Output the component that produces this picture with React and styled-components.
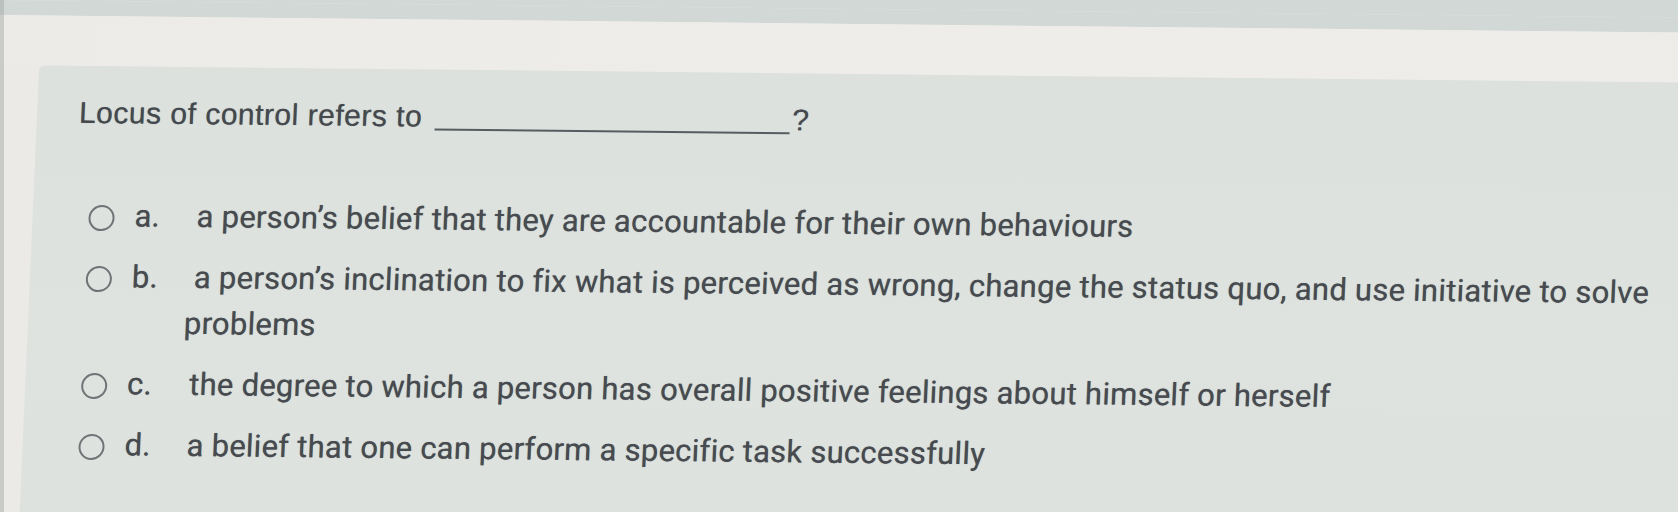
import styled, { createGlobalStyle } from "styled-components"

const GlobalStyle = createGlobalStyle`
    html, body {
        margin: 0;
        padding: 0;
        background: #d2d8d6;
        overflow: hidden;
    }
`

const Scene = styled.div`
    position: relative;
    width: 1678px;
    height: 512px;
    overflow: hidden;
    background: #d2d8d6;

    &::after {
        content: "";
        position: absolute;
        left: 0;
        top: 0;
        bottom: 0;
        width: 4px;
        background: rgba(160, 166, 163, 0.45);
    }
`

// the photo was taken at a slight angle
const Tilted = styled.div`
    width: 1730px;
    height: 580px;
    display: flex;
    flex-direction: column;
    background: #ebeae7;
    transform: skewY(0.6deg) skewX(-2.5deg);
    transform-origin: 0 0;
`

const TopBand = styled.div`
    height: 15px;
    flex-shrink: 0;
    background: #d1d8d6;
`

const LightBand = styled.div`
    height: 50px;
    flex-shrink: 0;
    background: linear-gradient(90deg, #ecebe8 0%, #efedea 60%, #edece9 100%);
`

const Body = styled.div`
    flex: 1;
    display: flex;
    padding-left: 42px;
`

const Card = styled.div`
    flex: 1;
    background: linear-gradient(180deg, #dce1de 0%, #dfe3e0 50%, #dee2df 100%);
    border-top-left-radius: 6px;
    padding: 29px 40px 0 42px;
`

const Question = styled.p`
    margin: 0;
    font-family: "Liberation Sans", Arial, sans-serif;
    font-size: 30px;
    letter-spacing: 0.5px;
    line-height: 36px;
    color: #45494e;
    text-shadow: 0 0 0.7px rgba(60, 64, 68, 0.7);
`

const Blank = styled.span`
    display: inline-block;
    width: 355px;
    height: 1px;
    border-bottom: 2.5px solid #575c60;
    margin: 0 2px -4px 13px;
`

const Options = styled.div`
    margin-top: 62px;
    padding-left: 14px;
    display: flex;
    flex-direction: column;
    gap: 15px;
`

const Option = styled.div`
    display: flex;
    align-items: flex-start;
    font-family: Roboto, "Noto Sans", sans-serif;
    font-size: 31px;
    letter-spacing: 0.25px;
    line-height: 46px;
    color: #474b50;
    text-shadow: 0 0 0.7px rgba(60, 64, 68, 0.7);
`

const Radio = styled.span`
    width: 26px;
    height: 26px;
    box-sizing: border-box;
    flex-shrink: 0;
    margin: 12px 20px 0 0;
    border: 2.5px solid #717476;
    border-radius: 50%;
`

const Letter = styled.span`
    width: 54px;
    flex-shrink: 0;
`

const Text = styled.span`
    flex: 1;
    text-indent: 8px;
`

const answers = [
    ["a.", "a person’s belief that they are accountable for their own behaviours"],
    ["b.", "a person’s inclination to fix what is perceived as wrong, change the status quo, and use initiative to solve problems"],
    ["c.", "the degree to which a person has overall positive feelings about himself or herself"],
    ["d.", "a belief that one can perform a specific task successfully"],
]

export default function App() {
    return (
        <Scene>
            <GlobalStyle />
            <Tilted>
                <TopBand />
                <LightBand />
                <Body>
                    <Card>
                        <Question>
                            Locus of control refers to<Blank />?
                        </Question>
                        <Options>
                            {answers.map(([letter, text]) => (
                                <Option key={letter}>
                                    <Radio />
                                    <Letter>{letter}</Letter>
                                    <Text>{text}</Text>
                                </Option>
                            ))}
                        </Options>
                    </Card>
                </Body>
            </Tilted>
        </Scene>
    )
}
